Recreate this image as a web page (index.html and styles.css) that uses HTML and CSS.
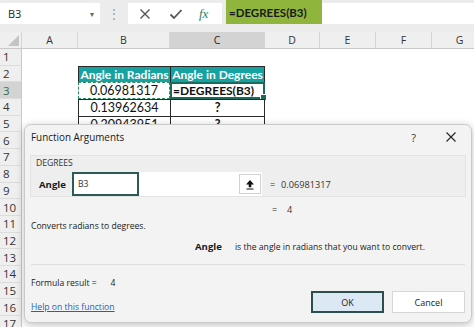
FILE: index.html
```html
<!DOCTYPE html>
<html>
<head>
<meta charset="utf-8">
<link rel="stylesheet" href="styles.css">
</head>
<body>
<div class="app">
  <div class="toolbar">
    <div class="namebox"><span>B3</span><span class="dd">&#9662;</span></div>
    <div class="dots">&#8942;</div>
    <div class="icons">
      <svg class="ico" width="12" height="12" viewBox="0 0 12 12"><path d="M1.5 1.5L10.5 10.5M10.5 1.5L1.5 10.5" stroke="#555" stroke-width="1.4" fill="none"/></svg>
      <svg class="ico" width="14" height="12" viewBox="0 0 14 12"><path d="M1.5 6.5L5 10L12.5 2" stroke="#555" stroke-width="1.8" fill="none"/></svg>
      <span class="fx">fx</span>
    </div>
    <div class="formula">=DEGREES(B3)</div>
    <div class="rest"></div>
  </div>
  <div class="sheet">
    <div class="corner"><span class="tri"></span></div>
    <div class="ch">A</div>
    <div class="ch">B</div>
    <div class="ch sel">C</div>
    <div class="ch">D</div>
    <div class="ch">E</div>
    <div class="ch">F</div>
    <div class="ch">G</div>

    <div class="rh">1</div><div class="c"></div><div class="c"></div><div class="c"></div><div class="c"></div><div class="c"></div><div class="c"></div><div class="c"></div>
    <div class="rh">2</div><div class="c"></div><div class="c th">Angle in Radians</div><div class="c th thr">Angle in Degrees</div><div class="c"></div><div class="c"></div><div class="c"></div><div class="c"></div>
    <div class="rh sel">3</div><div class="c"></div><div class="c td copy">0.06981317</div><div class="c td tdr active">=DEGREES(B3)<span class="handle"></span></div><div class="c"></div><div class="c"></div><div class="c"></div><div class="c"></div>
    <div class="rh">4</div><div class="c"></div><div class="c td">0.13962634</div><div class="c td tdr q">?</div><div class="c"></div><div class="c"></div><div class="c"></div><div class="c"></div>
    <div class="rh">5</div><div class="c"></div><div class="c td">0.20943951</div><div class="c td tdr q">?</div><div class="c"></div><div class="c"></div><div class="c"></div><div class="c"></div>
    <div class="rh">6</div><div class="c"></div><div class="c"></div><div class="c"></div><div class="c"></div><div class="c"></div><div class="c"></div><div class="c"></div>
    <div class="rh">7</div><div class="c"></div><div class="c"></div><div class="c"></div><div class="c"></div><div class="c"></div><div class="c"></div><div class="c"></div>
    <div class="rh">8</div><div class="c"></div><div class="c"></div><div class="c"></div><div class="c"></div><div class="c"></div><div class="c"></div><div class="c"></div>
    <div class="rh">9</div><div class="c"></div><div class="c"></div><div class="c"></div><div class="c"></div><div class="c"></div><div class="c"></div><div class="c"></div>
    <div class="rh">10</div><div class="c"></div><div class="c"></div><div class="c"></div><div class="c"></div><div class="c"></div><div class="c"></div><div class="c"></div>
    <div class="rh">11</div><div class="c"></div><div class="c"></div><div class="c"></div><div class="c"></div><div class="c"></div><div class="c"></div><div class="c"></div>
    <div class="rh">12</div><div class="c"></div><div class="c"></div><div class="c"></div><div class="c"></div><div class="c"></div><div class="c"></div><div class="c"></div>
    <div class="rh">13</div><div class="c"></div><div class="c"></div><div class="c"></div><div class="c"></div><div class="c"></div><div class="c"></div><div class="c"></div>
    <div class="rh">14</div><div class="c"></div><div class="c"></div><div class="c"></div><div class="c"></div><div class="c"></div><div class="c"></div><div class="c"></div>
    <div class="rh">15</div><div class="c"></div><div class="c"></div><div class="c"></div><div class="c"></div><div class="c"></div><div class="c"></div><div class="c"></div>
    <div class="rh">16</div><div class="c"></div><div class="c"></div><div class="c"></div><div class="c"></div><div class="c"></div><div class="c"></div><div class="c"></div>
    <div class="rh">17</div><div class="c"></div><div class="c"></div><div class="c"></div><div class="c"></div><div class="c"></div><div class="c"></div><div class="c"></div>

    <div class="dialog">
      <div class="titlebar">
        <span class="title">Function Arguments</span>
        <span class="help">?</span>
        <svg class="close" width="12" height="12" viewBox="0 0 12 12"><path d="M1.5 1.5L10.5 10.5M10.5 1.5L1.5 10.5" stroke="#222" stroke-width="1.1" fill="none"/></svg>
      </div>
      <div class="group">
        <div class="glabel">DEGREES</div>
        <div class="argrow">
          <span class="argname">Angle</span>
          <div class="input">
            <span class="focus">B3</span>
            <span class="pick">
              <svg width="10" height="11" viewBox="0 0 10 11"><path d="M5 1L9 5.5H6.3V8.3H3.7V5.5H1Z" fill="#111"/><path d="M1.5 10H8.5" stroke="#111" stroke-width="1"/></svg>
            </span>
          </div>
          <span class="eq">=</span>
          <span class="val">0.06981317</span>
        </div>
      </div>
      <div class="resrow"><span class="eq">=</span><span class="val2">4</span></div>
      <div class="desc">Converts radians to degrees.</div>
      <div class="argdesc"><b>Angle</b><span>is the angle in radians that you want to convert.</span></div>
      <div class="sep"></div>
      <div class="fres"><span>Formula result =</span><span class="fval">4</span></div>
      <div class="bottom">
        <span class="link">Help on this function</span>
        <div class="btns">
          <span class="btn ok">OK</span>
          <span class="btn cancel">Cancel</span>
        </div>
      </div>
    </div>
  </div>
</div>
</body>
</html>
```

FILE: styles.css
```css
html, body {
  margin: 0;
  padding: 0;
  background: #ffffff;
}
.app {
  width: 474px;
  height: 327px;
  overflow: hidden;
  background: #ececec;
  font-family: Lato, "Liberation Sans", sans-serif;
}
.toolbar {
  height: 26px;
  padding-top: 2px;
  padding-bottom: 4px;
  display: flex;
  align-items: stretch;
  box-sizing: content-box;
}
.toolbar > div {
  height: 21px;
}
.namebox {
  width: 100px;
  background: #fff;
  display: flex;
  align-items: center;
  justify-content: space-between;
  padding: 0 6px 0 8px;
  box-sizing: border-box;
  font-family: "Open Sans", sans-serif;
  font-size: 11px;
  color: #222;
  margin-top: 1px;
}
.namebox .dd {
  font-size: 8px;
  color: #666;
}
.dots {
  width: 28px;
  display: flex;
  align-items: center;
  justify-content: center;
  color: #999;
  font-size: 12px;
  margin-top: 1px;
}
.icons {
  width: 94px;
  background: #fff;
  display: flex;
  align-items: center;
  padding-left: 11px;
  gap: 18px;
  box-sizing: border-box;
  margin-top: 1px;
}
.fx {
  font-family: "Liberation Serif", serif;
  font-style: italic;
  font-size: 13px;
  color: #2f7d5c;
  margin-left: -2px;
}
.formula {
  width: 96px;
  margin-left: 4px;
  background: #90b53c;
  display: flex;
  align-items: center;
  padding-left: 3px;
  box-sizing: border-box;
  font-size: 11.5px;
  font-weight: bold;
  color: #1a1a1a;
  margin-top: -2px;
  height: 24px !important;
}
.rest {
  flex: 1;
  background: #fff;
  margin-top: 1px;
}
.sheet {
  position: relative;
  display: grid;
  grid-template-columns: 22px 56px 92px 95px 55px 56px 56px 56px;
  grid-template-rows: 17px repeat(17, 16.7px);
  background: #fff;
}
.corner {
  background: #efefef;
  border-right: 1px solid #d4d4d4;
  border-bottom: 1px solid #c8c8c8;
  position: relative;
}
.tri {
  position: absolute;
  right: 2px;
  bottom: 2px;
  width: 0;
  height: 0;
  border-left: 11px solid transparent;
  border-bottom: 11px solid #c4c4c4;
}
.ch {
  background: #efefef;
  border-right: 1px solid #d6d6d6;
  border-bottom: 1px solid #c8c8c8;
  display: flex;
  align-items: center;
  justify-content: center;
  font-family: "Open Sans", sans-serif;
  font-size: 10.5px;
  color: #333;
}
.ch.sel {
  background: #d3d3d3;
  color: #222;
}
.rh {
  background: #efefef;
  border-right: 1px solid #c8c8c8;
  border-bottom: 1px solid #dcdcdc;
  display: flex;
  align-items: center;
  padding-left: 3px;
  font-family: "Open Sans", sans-serif;
  font-size: 11.5px;
  color: #333;
}
.rh.sel {
  background: #d3d3d3;
  color: #2f6e4e;
}
.c {
  position: relative;
  display: flex;
  align-items: center;
  justify-content: center;
  font-size: 12.5px;
  color: #111;
  white-space: nowrap;
}
.th {
  background: #17a2a2;
  color: #fff;
  font-weight: bold;
  font-size: 12px;
  border-left: 1px solid #2a2a2a;
  border-top: 1px solid #2a2a2a;
}
.thr {
  border-right: 1px solid #2a2a2a;
}
.td {
  border-left: 1px solid #2a2a2a;
  border-top: 1px solid #2a2a2a;
}
.tdr {
  border-right: 1px solid #2a2a2a;
}
.copy {
  border: 1.5px dashed #2a8a5a;
}
.active {
  border: 2px solid #1c6a5a;
  justify-content: flex-start;
  padding-left: 1px;
  font-weight: bold;
  font-size: 12px;
}
.handle {
  position: absolute;
  right: -4px;
  bottom: -4px;
  width: 5px;
  height: 5px;
  background: #1c6a5a;
  border: 1px solid #fff;
}
.q {
  font-weight: bold;
}
.dialog {
  position: absolute;
  left: 24px;
  top: 92px;
  width: 448px;
  height: 199px;
  box-sizing: border-box;
  background: #f3f3f3;
  border: 1px solid #c9c9c9;
  border-radius: 7px;
  box-shadow: 0 2px 8px rgba(0,0,0,0.25);
  padding: 0 6px;
  font-family: "Open Sans", sans-serif;
  font-size: 8.6px;
  color: #1a1a1a;
}
.titlebar {
  height: 24px;
  display: flex;
  align-items: center;
  position: relative;
}
.title {
  font-size: 9.9px;
  flex: 1;
}
.help {
  font-size: 11px;
  color: #333;
  margin-right: 29px;
}
.close {
  margin-right: 8px;
}
.group {
  margin: 6px -1px 0 -1px;
  height: 42px;
  box-sizing: border-box;
  background: #eeeeee;
  border: 1px solid #e3e3e3;
  padding: 1px 0 0 5px;
}
.glabel {
  height: 13px;
  line-height: 13px;
  font-size: 8.6px;
  color: #333;
}
.argrow {
  margin-top: 2px;
  height: 24px;
  display: flex;
  align-items: center;
}
.argname {
  font-weight: bold;
  font-size: 9.6px;
  width: 36px;
  padding-left: 3px;
  box-sizing: border-box;
}
.input {
  width: 190px;
  height: 24px;
  box-sizing: border-box;
  background: #fff;
  display: flex;
  align-items: stretch;
}
.focus {
  width: 67px;
  box-sizing: border-box;
  border: 2px solid #2c5a56;
  padding-left: 4px;
  display: flex;
  align-items: center;
  font-size: 8.6px;
  color: #333;
}
.pick {
  margin-left: auto;
  width: 22px;
  margin-top: 2px;
  margin-bottom: 2px;
  margin-right: 1px;
  border: 1px solid #d2d2d2;
  box-sizing: border-box;
  display: flex;
  align-items: center;
  justify-content: center;
  background: #fff;
}
.eq {
  margin-left: 8px;
  width: 11px;
  color: #333;
  font-size: 9px;
}
.val {
  color: #333;
  font-size: 9.2px;
}
.resrow {
  height: 22px;
  display: flex;
  align-items: center;
  padding-left: 233px;
  margin-top: 1px;
  font-size: 9.2px;
}
.val2 {
  margin-left: 4px;
  color: #333;
}
.desc {
  height: 16px;
  line-height: 16px;
  margin-top: -2px;
}
.argdesc {
  height: 16px;
  line-height: 16px;
  margin-top: 5px;
  padding-left: 164px;
  display: flex;
  gap: 13px;
}
.argdesc b {
  font-size: 9.6px;
}
.sep {
  margin-top: 9px;
  height: 1px;
  background: #dedede;
}
.fres {
  margin-top: 10px;
  height: 16px;
  line-height: 16px;
  display: flex;
}
.fval {
  margin-left: 14px;
}
.bottom {
  margin-top: 0px;
  display: flex;
  align-items: center;
  justify-content: space-between;
}
.link {
  color: #1d63b8;
  text-decoration: underline;
  margin-top: 10px;
}
.btns {
  display: flex;
  gap: 8px;
}
.btn {
  width: 73px;
  height: 22px;
  box-sizing: border-box;
  display: flex;
  align-items: center;
  justify-content: center;
  font-size: 9px;
  color: #222;
}
.ok {
  background: #dce9f4;
  border: 2px solid #2b4f4d;
}
.cancel {
  background: #fff;
  border: 1px solid #d6d6d6;
}
```
